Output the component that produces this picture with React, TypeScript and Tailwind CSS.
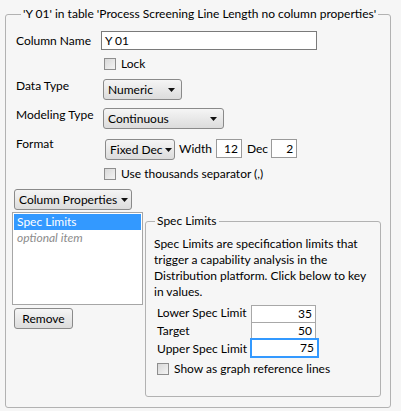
import React from "react";

const font = { fontFamily: 'Lato, "Noto Sans", sans-serif' };

const Arrow = () => (
  <svg width="7" height="4" viewBox="0 0 7 4" className="shrink-0">
    <path d="M0 0H7L3.5 4Z" fill="#111" />
  </svg>
);

const Dropdown = ({ label, className }: { label: string; className: string }) => (
  <div
    className={`flex items-center justify-between rounded-[3px] border border-[#8a8a8a] bg-gradient-to-b from-[#f5f5f5] to-[#dcdcdc] pl-[4px] text-[12px] leading-[16px] text-black ${className}`}
  >
    <span>{label}</span>
    <Arrow />
  </div>
);

const Checkbox = ({ label }: { label: string }) => (
  <div className="flex h-[16px] items-center gap-[5px]">
    <div className="h-[12px] w-[12px] border border-[#8e8e8e] bg-gradient-to-br from-[#d8d8d8] to-[#f4f4f4]" />
    <span className="text-[12px] leading-[16px] text-black">{label}</span>
  </div>
);

const Field = ({ value, className }: { value: string; className: string }) => (
  <div className={`flex items-center justify-end bg-white pr-[3px] text-[12px] leading-[16px] text-black ${className}`}>
    {value}
  </div>
);

export default function App() {
  return (
    <div className="h-[411px] w-[401px] whitespace-nowrap bg-[#f6f6f6] pt-[6px] leading-[16px]" style={font}>
      <fieldset className="mx-[5px] h-[402px] w-[386px] rounded-[3px] border border-[#b2b2b2] pl-[10px] pr-[8px]">
        <legend className="ml-[5px] px-[2px] text-[12px] leading-[16px] text-black">
          'Y 01' in table 'Process Screening Line Length no column properties'
        </legend>

        <div className="mt-[9px] flex items-center">
          <span className="w-[85px] text-[12px] text-black">Column Name</span>
          <div className="flex h-[19px] w-[216px] items-center border border-[#7a7a7a] bg-white pl-[3px] text-[12px] text-black">
            Y 01
          </div>
        </div>

        <div className="mt-[6px] pl-[88px]">
          <Checkbox label="Lock" />
        </div>

        <div className="mt-[7px] flex items-start">
          <span className="-mt-[1px] w-[87px] text-[12px] text-black">Data Type</span>
          <Dropdown label="Numeric" className="h-[21px] w-[79px] pr-[6px]" />
        </div>

        <div className="mt-[8px] flex items-start">
          <span className="-mt-[1px] w-[87px] text-[12px] text-black">Modeling Type</span>
          <Dropdown label="Continuous" className="h-[21px] w-[121px] pr-[6px]" />
        </div>

        <div className="mt-[10px] flex items-start">
          <span className="-mt-[3px] w-[89px] text-[12px] text-black">Format</span>
          <Dropdown label="Fixed Dec" className="h-[21px] w-[70px] pl-[4px] pr-[2px]" />
          <span className="ml-[4px] mt-[2px] text-[12px] text-black">Width</span>
          <Field value="12" className="ml-[4px] h-[19px] w-[26px] border border-[#9a9a9a]" />
          <span className="ml-[5px] mt-[2px] text-[12px] text-black">Dec</span>
          <Field value="2" className="ml-[3px] h-[19px] w-[26px] border border-[#9a9a9a]" />
        </div>

        <div className="mt-[6px] pl-[88px]">
          <Checkbox label="Use thousands separator (,)" />
        </div>

        <Dropdown label="Column Properties" className="mt-[7px] -ml-[2px] h-[21px] w-[118px] pr-[3px]" />

        <div className="mt-[2px] -ml-[4px] flex items-start">
          <div className="flex w-[131px] flex-col">
            <div className="h-[93px] border border-[#a6a6a6] bg-white p-[1px] text-[12px]">
              <div className="h-[16px] bg-[#3399ff] pl-[3px] leading-[16px] text-white">Spec Limits</div>
              <div className="h-[16px] pl-[3px] leading-[16px] italic text-[#8c8c8c]">optional item</div>
            </div>
            <div className="ml-[2px] mt-[3px] flex h-[21px] w-[59px] items-center justify-center rounded-[3px] border border-[#8a8a8a] bg-gradient-to-b from-[#f5f5f5] to-[#dcdcdc] text-[12px] text-black">
              Remove
            </div>
          </div>

          <fieldset className="ml-[2px] mt-[1px] h-[184px] w-[236px] rounded-[3px] border border-[#b2b2b2] pl-[8px]">
            <legend className="ml-[1px] px-[2px] text-[12px] leading-[16px] text-black">Spec Limits</legend>
            <p className="mt-[7px] w-[218px] whitespace-normal text-[12px] leading-[16px] text-black">
              Spec Limits are specification limits that trigger a capability analysis in the Distribution platform.
              Click below to key in values.
            </p>
            <div className="mt-[5px] pl-[3px]">
              <div className="flex h-[17px] items-start">
                <span className="w-[94px] text-[12px] text-black">Lower Spec Limit</span>
                <Field value="35" className="h-[18px] w-[65px] border border-[#a8a8a8]" />
              </div>
              <div className="flex h-[17px] items-start">
                <span className="mt-[1px] w-[94px] text-[12px] text-black">Target</span>
                <Field value="50" className="h-[18px] w-[65px] border border-[#a8a8a8]" />
              </div>
              <div className="flex h-[19px] items-start">
                <span className="mt-[2px] w-[93px] text-[12px] text-black">Upper Spec Limit</span>
                <Field value="75" className="-mt-[1px] h-[20px] w-[69px] border-2 border-[#3399ff]" />
              </div>
              <div className="mt-[3px]">
                <Checkbox label="Show as graph reference lines" />
              </div>
            </div>
          </fieldset>
        </div>
      </fieldset>
    </div>
  );
}
